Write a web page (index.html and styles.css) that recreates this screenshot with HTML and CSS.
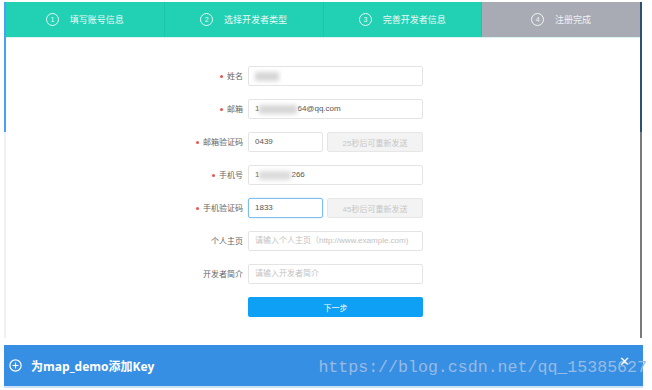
FILE: index.html
```html
<!DOCTYPE html>
<html lang="zh-CN">
  <head>
    <meta charset="UTF-8" />
    <meta name="viewport" content="width=device-width, initial-scale=1.0" />
    <title>注册开发者</title>
    <link rel="stylesheet" href="styles.css">
  </head>
  <body>
    <div class="frame">
      <div class="edge edge-left"></div>
      <div class="main">
        <div class="steps">
          <div class="step done"><span class="num">1</span>填写账号信息</div>
          <div class="step done"><span class="num">2</span>选择开发者类型</div>
          <div class="step done"><span class="num">3</span>完善开发者信息</div>
          <div class="step todo"><span class="num">4</span>注册完成</div>
        </div>

        <div class="form">
          <label class="label req">姓名</label>
          <div class="field"><span class="blur short"></span></div>

          <label class="label req">邮箱</label>
          <div class="field">1<span class="blur"></span>64@qq.com</div>

          <label class="label req">邮箱验证码</label>
          <div class="pair">
            <div class="field">0439</div>
            <button class="resend">25秒后可重新发送</button>
          </div>

          <label class="label req">手机号</label>
          <div class="field">1<span class="blur mid"></span>266</div>

          <label class="label req">手机验证码</label>
          <div class="pair">
            <div class="field focus">1833</div>
            <button class="resend">45秒后可重新发送</button>
          </div>

          <label class="label">个人主页</label>
          <div class="field hint">请输入个人主页（http://www.example.com)</div>

          <label class="label">开发者简介</label>
          <div class="field hint">请输入开发者简介</div>

          <span></span>
          <button class="next">下一步</button>
        </div>
      </div>
      <div class="edge edge-right"></div>
    </div>

    <div class="keybar">
      <svg class="plus" width="13" height="13" viewBox="0 0 13 13">
        <circle cx="6.5" cy="6.5" r="5.6" fill="none" stroke="#fff" stroke-width="1.2" />
        <path d="M6.5 3.5v6M3.5 6.5h6" stroke="#fff" stroke-width="1.2" />
      </svg>
      <span class="title">为map_demo添加Key</span>
      <span class="mark">https://blog.csdn.net/qq_15385627</span>
      <span class="close">✕</span>
    </div>
  </body>
</html>
```

FILE: styles.css
```css
body {
  margin: 0;
  width: 652px;
  height: 390px;
  background-color: #fff;
  font-family: "Noto Sans CJK SC", "Noto Sans", sans-serif;
  overflow: hidden;
}
.frame {
  display: flex;
  margin: 2px 10px 0 4px;
  height: 336px;
}
.edge {
  width: 2px;
  flex: none;
}
.edge-left {
  background: linear-gradient(#4aa0f7 0 130px, #f1f1f1 130px);
}
.edge-right {
  background: linear-gradient(#2c5273 0 130px, #7a7a7a 130px);
}
.main {
  flex: 1;
}
.steps {
  display: flex;
  height: 35px;
  border-bottom: 1px solid #d9f4ee;
}
.step {
  flex: 1;
  display: flex;
  align-items: center;
  justify-content: center;
  font-size: 9px;
  color: #eafaf6;
}
.step.done {
  background-color: #22d0b4;
  border-right: 1px solid #1fc4a9;
}
.step.todo {
  background-color: #a8abb3;
  color: #f0f1f3;
}
.num {
  width: 11px;
  height: 11px;
  border: 1px solid #eafaf6;
  border-radius: 50%;
  font-size: 7px;
  line-height: 11px;
  text-align: center;
  margin-right: 11px;
  font-family: "Liberation Sans", sans-serif;
}
.form {
  display: grid;
  grid-template-columns: 60px 175px;
  column-gap: 5px;
  row-gap: 13px;
  padding: 28px 0 0 177px;
}
.label {
  font-size: 8px;
  color: #666;
  text-align: right;
  line-height: 20px;
}
.label.req::before {
  content: "";
  display: inline-block;
  width: 3px;
  height: 3px;
  border-radius: 50%;
  background-color: #f0524b;
  margin: 0 4px 1px 0;
  vertical-align: middle;
}
.field {
  height: 20px;
  box-sizing: border-box;
  border: 1px solid #e4e4e4;
  border-radius: 2px;
  padding-left: 6px;
  font-family: "Liberation Sans", "Noto Sans CJK SC", sans-serif;
  font-size: 8px;
  line-height: 18px;
  color: #555;
  display: flex;
  align-items: center;
}
.field.hint {
  color: #c2c2c2;
}
.field.focus {
  border-color: #7dbdf0;
  box-shadow: 0 0 2px #bcdcf7;
}
.blur {
  display: inline-block;
  width: 38px;
  height: 9px;
  background-color: #d6d6d6;
  filter: blur(2px);
}
.blur.short {
  width: 24px;
}
.blur.mid {
  width: 32px;
  background-color: #dcdcdc;
}
.pair {
  display: flex;
  gap: 4px;
}
.pair .field {
  width: 75px;
}
.resend {
  flex: 1;
  height: 20px;
  border: 1px solid #e6e6e6;
  border-radius: 2px;
  background-color: #f3f3f3;
  color: #c6c6c6;
  font-family: "Liberation Sans", "Noto Sans CJK SC", sans-serif;
  font-size: 8px;
  padding: 0;
}
.next {
  height: 20px;
  border: none;
  border-radius: 2px;
  background-color: #0ea0f5;
  color: #fff;
  font-family: "Noto Sans CJK SC", sans-serif;
  font-size: 8px;
  padding: 0;
}
.keybar {
  position: relative;
  display: flex;
  align-items: center;
  margin: 7px 9px 0 4px;
  height: 41px;
  padding-left: 5px;
  background-color: #378fe4;
  border-bottom: 2px solid #cfe1f4;
}
.plus {
  margin-right: 9px;
}
.title {
  color: #fff;
  font-weight: bold;
  font-size: 12px;
  font-family: "Open Sans", "Noto Sans CJK SC", sans-serif;
}
.mark {
  margin-left: auto;
  margin-right: -4px;
  margin-top: 4px;
  font-family: "Liberation Mono", monospace;
  font-size: 16.6px;
  color: #97bbe3;
  white-space: nowrap;
}
.close {
  position: absolute;
  right: 13px;
  top: 9px;
  color: #fff;
  font-size: 13px;
  font-weight: bold;
  font-family: "DejaVu Sans", sans-serif;
}
```
